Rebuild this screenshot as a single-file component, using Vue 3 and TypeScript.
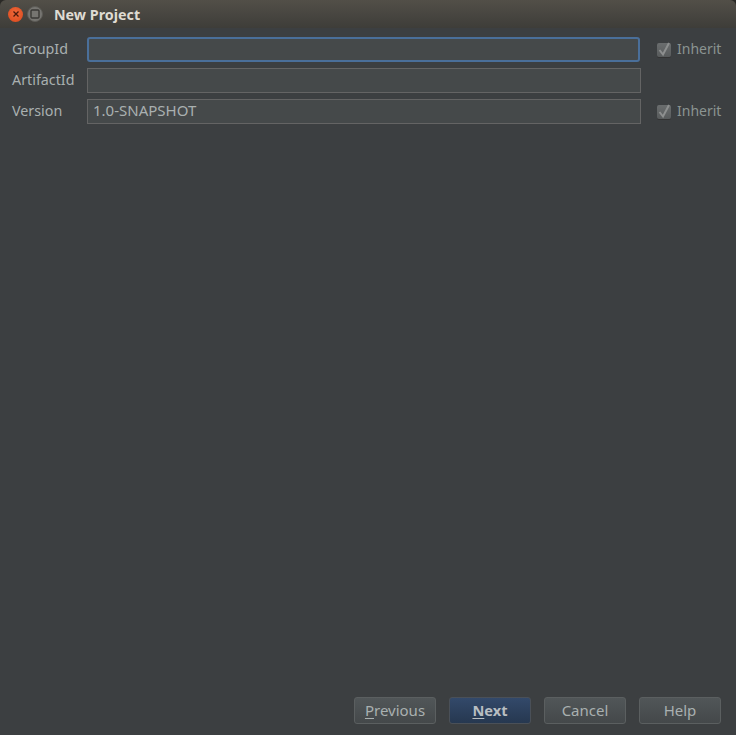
<script setup lang="ts">
interface Field { label: string; value: string; focused: boolean; inherit: boolean }
interface Action { before: string; key: string; after: string; primary: boolean }

const fields: Field[] = [
  { label: 'GroupId', value: '', focused: true, inherit: true },
  { label: 'ArtifactId', value: '', focused: false, inherit: false },
  { label: 'Version', value: '1.0-SNAPSHOT', focused: false, inherit: true },
]
const actions: Action[] = [
  { before: '', key: 'P', after: 'revious', primary: false },
  { before: '', key: 'N', after: 'ext', primary: true },
  { before: 'Cancel', key: '', after: '', primary: false },
  { before: 'Help', key: '', after: '', primary: false },
]
</script>

<template>
  <div class="window">
    <header class="titlebar">
      <span class="win-btn close">
        <svg width="10" height="10" viewBox="0 0 10 10"><path d="M2.5 2.5l5 5M7.5 2.5l-5 5" stroke="#4a1a0c" stroke-width="1.3" fill="none" /></svg>
      </span>
      <span class="win-btn maximize">
        <svg width="10" height="10" viewBox="0 0 10 10"><rect x="1" y="1" width="8" height="8" rx="1" stroke="#3a3936" stroke-width="1.4" fill="none" /></svg>
      </span>
      <span class="title">New Project</span>
    </header>

    <div class="content">
      <main class="form">
        <template v-for="field in fields" :key="field.label">
          <label class="label">{{ field.label }}</label>
          <div class="input" :class="{ focused: field.focused }">{{ field.value }}</div>
          <div class="inherit">
            <template v-if="field.inherit">
              <span class="checkbox">
                <svg class="check" width="16" height="16" viewBox="0 0 16 16"><path d="M3.5 8l3.5 4.5 6-11.5" stroke="#8d8f8f" stroke-width="2" fill="none" /></svg>
              </span>
              <span class="inherit-text">Inherit</span>
            </template>
          </div>
        </template>
      </main>

      <footer class="actions">
        <button v-for="a in actions" :key="a.before + a.key" class="btn" :class="{ primary: a.primary }">{{ a.before }}<u>{{ a.key }}</u>{{ a.after }}</button>
      </footer>
    </div>
  </div>
</template>

<style>
html, body { margin: 0; background: #2a2926; }
</style>

<style scoped>
.window {
  width: 736px;
  height: 735px;
  display: flex;
  flex-direction: column;
  background: #2a2926;
  font-family: "Noto Sans", "Open Sans", sans-serif;
  font-size: 14.3px;
  color: #a9b0b0;
  overflow: hidden;
}
.titlebar {
  height: 28px;
  flex: none;
  display: flex;
  align-items: center;
  padding-left: 8px;
  background: linear-gradient(#524f48, #3e3d39);
  border-radius: 6px 6px 0 0;
  box-sizing: border-box;
}
.win-btn {
  width: 15px;
  height: 15px;
  border-radius: 50%;
  display: flex;
  align-items: center;
  justify-content: center;
  margin-right: 4px;
}
.close { background: radial-gradient(circle at 50% 40%, #f0693a, #d9481c); }
.maximize { width: 16px; height: 16px; background: #767571; border: 1px solid #5c5b56; box-sizing: border-box; }
.title {
  margin-left: 7px;
  font-weight: 700;
  font-size: 14.3px;
  color: #dfdbd2;
}
.content {
  flex: 1;
  display: flex;
  flex-direction: column;
  background: #3c3f41;
}
.form {
  display: grid;
  grid-template-columns: 75px 554px 1fr;
  grid-auto-rows: 25px;
  row-gap: 6px;
  padding: 9px 0 0 12px;
  align-items: center;
}
.label { color: #a9b0b0; padding-bottom: 2px; }
.input {
  height: 25px;
  box-sizing: border-box;
  border: 1px solid #646464;
  background: #45494a;
  padding: 0 5px 2px;
  line-height: 21px;
  font-size: 15px;
  color: #a9b0b0;
}
.input.focused {
  width: 553px;
  border: 2px solid #4a6f9a;
  border-radius: 3px;
}
.inherit {
  display: flex;
  align-items: center;
  padding-left: 16px;
}
.checkbox {
  width: 14px;
  height: 14px;
  position: relative;
  background: linear-gradient(#6a6d6e, #585b5c);
  border-radius: 2px;
  box-shadow: 0 1px 0 #333;
}
.check { position: absolute; left: -1px; top: -1px; }
.inherit-text { margin-left: 6px; font-size: 14px; color: #8b9491; padding-bottom: 2px; }
.actions {
  margin-top: auto;
  display: flex;
  justify-content: flex-end;
  gap: 13px;
  padding: 0 15px 11px 0;
}
.btn {
  width: 82px;
  height: 27px;
  padding: 0 0 2px;
  font: inherit;
  font-size: 15px;
  color: #a9b0b0;
  border: 1px solid #5b5f60;
  border-radius: 3px;
  background: linear-gradient(#515658, #44484a);
}
.btn u { text-underline-offset: 2px; }
.btn.primary {
  font-weight: 700;
  font-size: 14.6px;
  color: #b8bec2;
  background: linear-gradient(#33496a, #263850);
  border-color: #4a5058;
}
</style>
